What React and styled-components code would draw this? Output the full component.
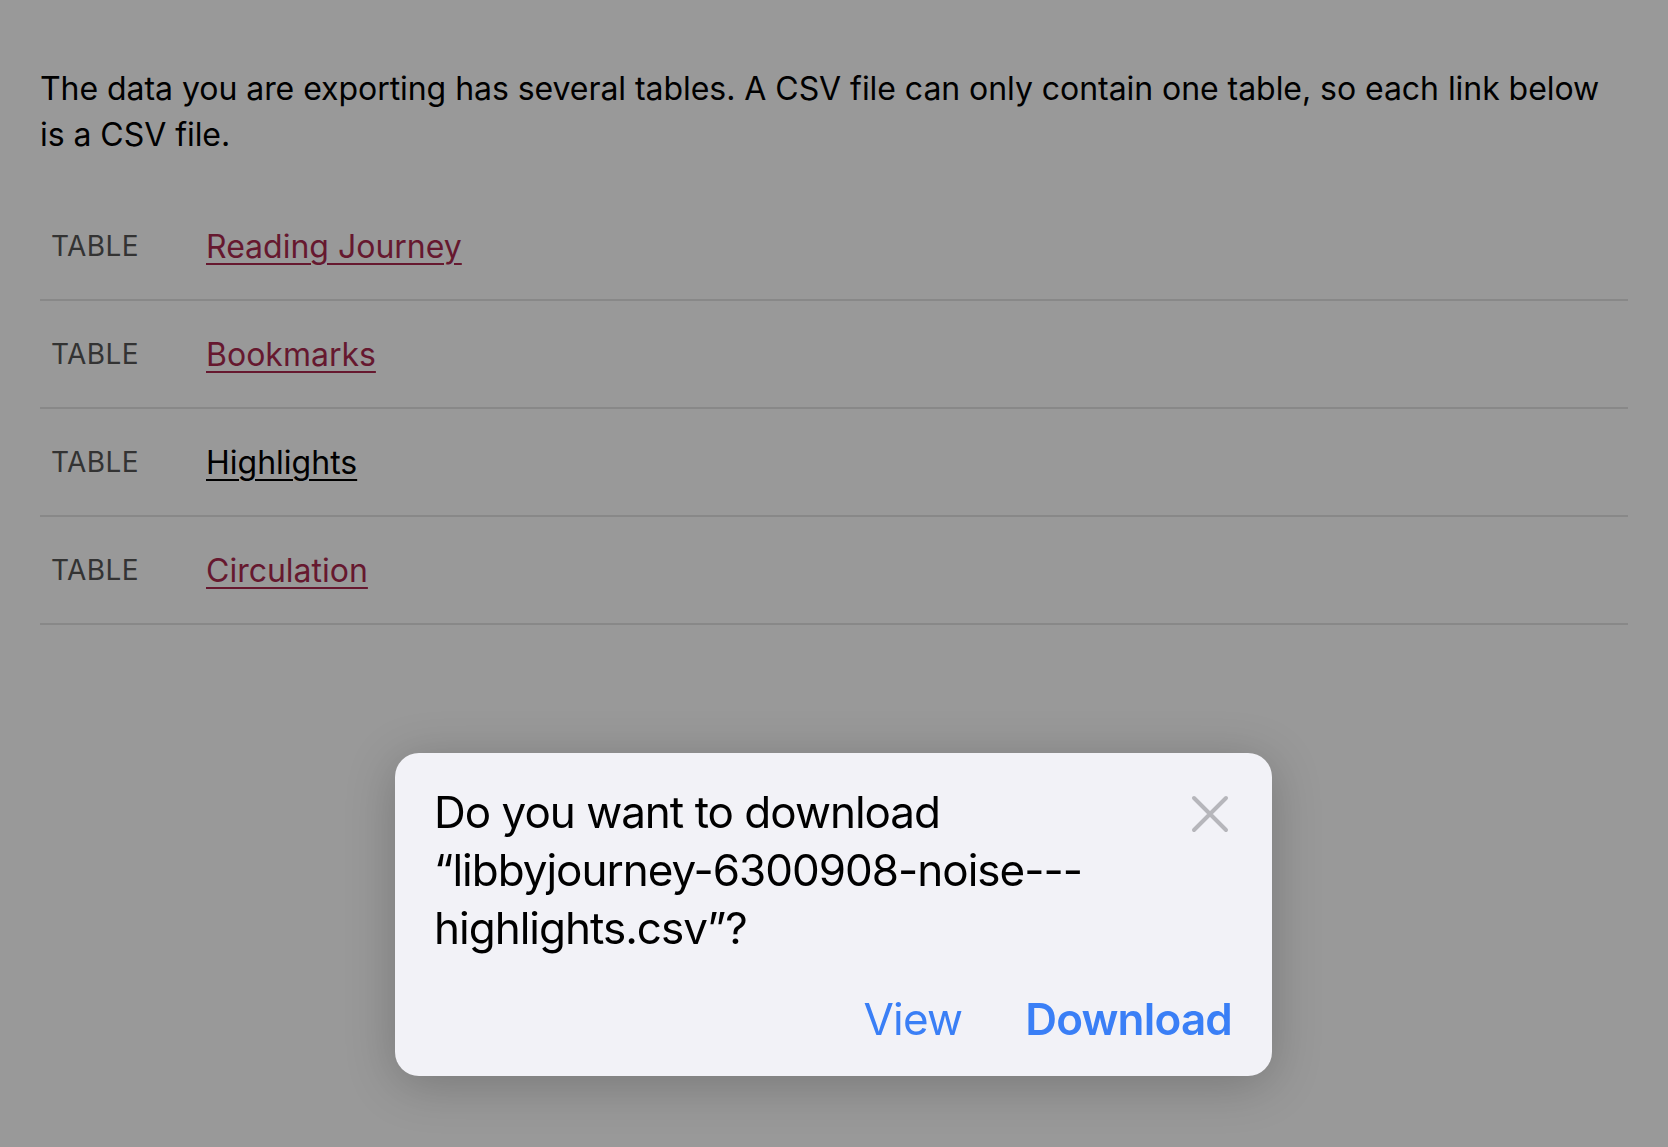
import React from 'react';
import styled, { createGlobalStyle } from 'styled-components';

const GlobalStyle = createGlobalStyle`
	html, body {
		margin: 0;
		padding: 0;
		background: #999999;
	}
	body {
		font-family: Inter, "Noto Sans", sans-serif;
		-webkit-font-smoothing: antialiased;
	}
`;

const tables = [
	{ name: 'Reading Journey', visited: false },
	{ name: 'Bookmarks', visited: false },
	{ name: 'Highlights', visited: true },
	{ name: 'Circulation', visited: false },
];

export default function App() {
	return (
		<>
			<GlobalStyle />
			<Page>
				<Intro>
					The data you are exporting has several tables. A CSV file can only contain one table, so
					each link below is a CSV file.
				</Intro>
				<TableList>
					{tables.map((t) => (
						<TableRow key={t.name}>
							<Kind>TABLE</Kind>
							<TableLink href="#" $active={t.visited}>
								{t.name}
							</TableLink>
						</TableRow>
					))}
				</TableList>
			</Page>
			<Prompt>
				<PromptHead>
					<PromptText>
						Do you want to download
						<br />
						“libbyjourney-6300908-noise---
						<br />
						highlights.csv”?
					</PromptText>
					<CloseBtn aria-label="Close">
						<svg width="38" height="38" viewBox="0 0 38 38">
							<path
								d="M3 3 L35 35 M35 3 L3 35"
								stroke="#b6b6bb"
								strokeWidth="4"
								strokeLinecap="round"
								fill="none"
							/>
						</svg>
					</CloseBtn>
				</PromptHead>
				<PromptActions>
					<ActionBtn>View</ActionBtn>
					<ActionBtn $primary>Download</ActionBtn>
				</PromptActions>
			</Prompt>
		</>
	);
}

const Page = styled.main`
	padding: 66px 40px 0 40px;
	min-height: 1147px;
	box-sizing: border-box;
`;

const Intro = styled.p`
	margin: 0 0 35px 0;
	max-width: 1572px;
	font-size: 32px;
	line-height: 46px;
	color: #000;
	letter-spacing: -0.05px;
`;

const TableList = styled.div`
	display: flex;
	flex-direction: column;
`;

const TableRow = styled.div`
	display: flex;
	align-items: center;
	height: 106px;
	border-bottom: 2px solid #888888;
	padding-left: 11px;
`;

const Kind = styled.span`
	width: 155px;
	font-size: 28px;
	color: #333333;
	letter-spacing: 0.4px;
`;

const TableLink = styled.a`
	font-size: 32px;
	color: ${(p) => (p.$active ? '#000000' : '#66182f')};
	text-decoration: underline;
	text-decoration-thickness: 2px;
	text-underline-offset: 5px;
`;

const Prompt = styled.div`
	position: fixed;
	left: 395px;
	top: 753px;
	width: 877px;
	height: 323px;
	box-sizing: border-box;
	padding: 30px 40px 0 39px;
	background: #f2f2f7;
	border-radius: 24px;
	box-shadow: 0 8px 50px rgba(0, 0, 0, 0.22);
	display: flex;
	flex-direction: column;
`;

const PromptHead = styled.div`
	display: flex;
	justify-content: space-between;
	align-items: flex-start;
`;

const PromptText = styled.p`
	margin: 0;
	font-size: 44px;
	line-height: 58px;
	letter-spacing: -1px;
	color: #000;
`;

const CloseBtn = styled.button`
	border: none;
	background: none;
	padding: 0;
	margin: 12px 3px 0 0;
	width: 38px;
	height: 38px;
	cursor: pointer;
`;

const PromptActions = styled.div`
	display: flex;
	justify-content: flex-end;
	gap: 63px;
	margin-top: 36px;
`;

const ActionBtn = styled.button`
	border: none;
	background: none;
	padding: 0;
	font-family: Inter, "Noto Sans", sans-serif;
	font-size: 44px;
	line-height: 52px;
	letter-spacing: -0.8px;
	font-weight: ${(p) => (p.$primary ? 600 : 400)};
	color: #3a7ff6;
	cursor: pointer;
`;
